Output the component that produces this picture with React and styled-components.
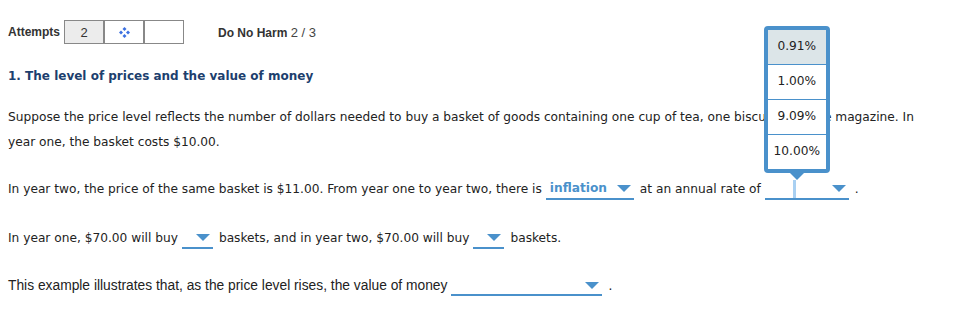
import React from "react";
import styled, { createGlobalStyle } from "styled-components";

const Global = createGlobalStyle`
  html, body { margin: 0; padding: 0; background: #fff; }
  body { font-family: "DejaVu Sans", Verdana, sans-serif; color: #222; }
`;

const BLUE = "#4a91cb";
const FS = "12.2px";

const Page = styled.div`
  width: 964px;
  height: 314px;
  box-sizing: border-box;
  padding: 20px 8px 0 8px;
  position: relative;
  overflow: hidden;
`;

const Header = styled.div`
  display: flex;
  align-items: center;
  height: 24px;
  font-family: "Liberation Sans", Arial, sans-serif;
  font-size: 12px;
  color: #333;
`;

const Label = styled.span`
  font-weight: bold;
  margin-right: 4px;
`;

const Cells = styled.div`
  display: flex;
  border: 1px solid #888;
  height: 22px;
`;

const Cell = styled.div`
  width: 38px;
  height: 22px;
  display: flex;
  align-items: center;
  justify-content: center;
  background: ${(p) => (p.$shaded ? "#ececec" : "#fff")};
  border-left: ${(p) => (p.$first ? "none" : "2px solid #888")};
  font-size: 13px;
  color: #333;
`;

const Score = styled.span`
  margin-left: 34px;
  font-weight: bold;
  & > span { font-weight: normal; font-size: 13px; color: #444; }
`;

const Title = styled.h2`
  margin: 22px 0 0 0;
  font-size: 12px;
  line-height: 20px;
  font-weight: bold;
  color: #1d3f6e;
  font-family: "DejaVu Sans", Verdana, sans-serif;
`;

const Para = styled.p`
  margin: ${(p) => p.$mt}px 0 0 0;
  max-width: 915px;
  line-height: 25px;
  font-family: ${(p) =>
    p.$arial ? `"Liberation Sans", Arial, sans-serif` : `"DejaVu Sans", Verdana, sans-serif`};
  font-size: ${(p) => (p.$arial ? "13.8px" : FS)};
  color: #222;
`;

const SelectBox = styled.span`
  position: relative;
  display: inline-flex;
  align-items: center;
  justify-content: space-between;
  vertical-align: middle;
  box-sizing: border-box;
  width: ${(p) => p.$w}px;
  height: 20px;
  margin: 0 ${(p) => p.$mr ?? 6}px 0 ${(p) => p.$ml ?? 4}px;
  padding: 0 3px 0 4px;
  border-bottom: 2px solid ${BLUE};
  color: ${BLUE};
  font-family: "DejaVu Sans", Verdana, sans-serif;
  font-weight: bold;
  font-size: ${FS};
`;

const Arrow = styled.span`
  width: 0;
  height: 0;
  margin-left: auto;
  border-left: 7px solid transparent;
  border-right: 7px solid transparent;
  border-top: 7px solid ${BLUE};
`;

const Caret = styled.span`
  position: absolute;
  left: 28px;
  top: 0;
  width: 3px;
  height: 18px;
  background: #a9d0f2;
`;

const Popup = styled.div`
  position: absolute;
  left: -1px;
  bottom: 25px;
  width: 58px;
  border: 4px solid ${BLUE};
  border-radius: 4px;
  background: #fff;
  display: flex;
  flex-direction: column;
  &::after {
    content: "";
    position: absolute;
    left: 22px;
    bottom: -11px;
    border-left: 7px solid transparent;
    border-right: 7px solid transparent;
    border-top: 7px solid ${BLUE};
  }
`;

const Option = styled.div`
  height: 34px;
  display: flex;
  align-items: center;
  justify-content: center;
  font-weight: normal;
  font-size: ${FS};
  color: #222;
  background: ${(p) => (p.$active ? "#dce5e8" : "#fff")};
  border-top: ${(p) => (p.$first ? "none" : `1px solid ${BLUE}`)};
`;

const Select = ({ w, value, ml, mr, children }) => (
  <SelectBox $w={w} $ml={ml} $mr={mr}>
    {value}
    <Arrow />
    {children}
  </SelectBox>
);

const MoveIcon = () => (
  <svg width="11" height="11" viewBox="0 0 11 11">
    <g fill="#3b6fe0">
      <path d="M5.5 0 L7.5 2 L5.5 4 L3.5 2 Z" />
      <path d="M5.5 7 L7.5 9 L5.5 11 L3.5 9 Z" />
      <path d="M2 3.5 L4 5.5 L2 7.5 L0 5.5 Z" />
      <path d="M9 3.5 L11 5.5 L9 7.5 L7 5.5 Z" />
    </g>
  </svg>
);

export default function App() {
  return (
    <Page>
      <Global />
      <Header>
        <Label>Attempts</Label>
        <Cells>
          <Cell $first $shaded>2</Cell>
          <Cell><MoveIcon /></Cell>
          <Cell />
        </Cells>
        <Score>Do No Harm <span>2 / 3</span></Score>
      </Header>
      <Title>1. The level of prices and the value of money</Title>
      <Para $mt={19}>
        Suppose the price level reflects the number of dollars needed to buy a basket of goods
        containing one cup of tea, one biscuit, and one magazine. In year one, the basket costs
        $10.00.
      </Para>
      <Para $mt={22}>
        In year two, the price of the same basket is $11.00. From year one to year two, there is
        <Select w={88} value="inflation" />
        at an annual rate of
        <Select w={84} ml={4} mr={6}>
          <Caret />
          <Popup>
            <Option $first $active>0.91%</Option>
            <Option>1.00%</Option>
            <Option>9.09%</Option>
            <Option>10.00%</Option>
          </Popup>
        </Select>
        .
      </Para>
      <Para $mt={24}>
        In year one, $70.00 will buy
        <Select w={31} />
        baskets, and in year two, $70.00 will buy
        <Select w={31} />
        baskets.
      </Para>
      <Para $mt={22} $arial>
        This example illustrates that, as the price level rises, the value of money
        <Select w={151} />
        .
      </Para>
    </Page>
  );
}
